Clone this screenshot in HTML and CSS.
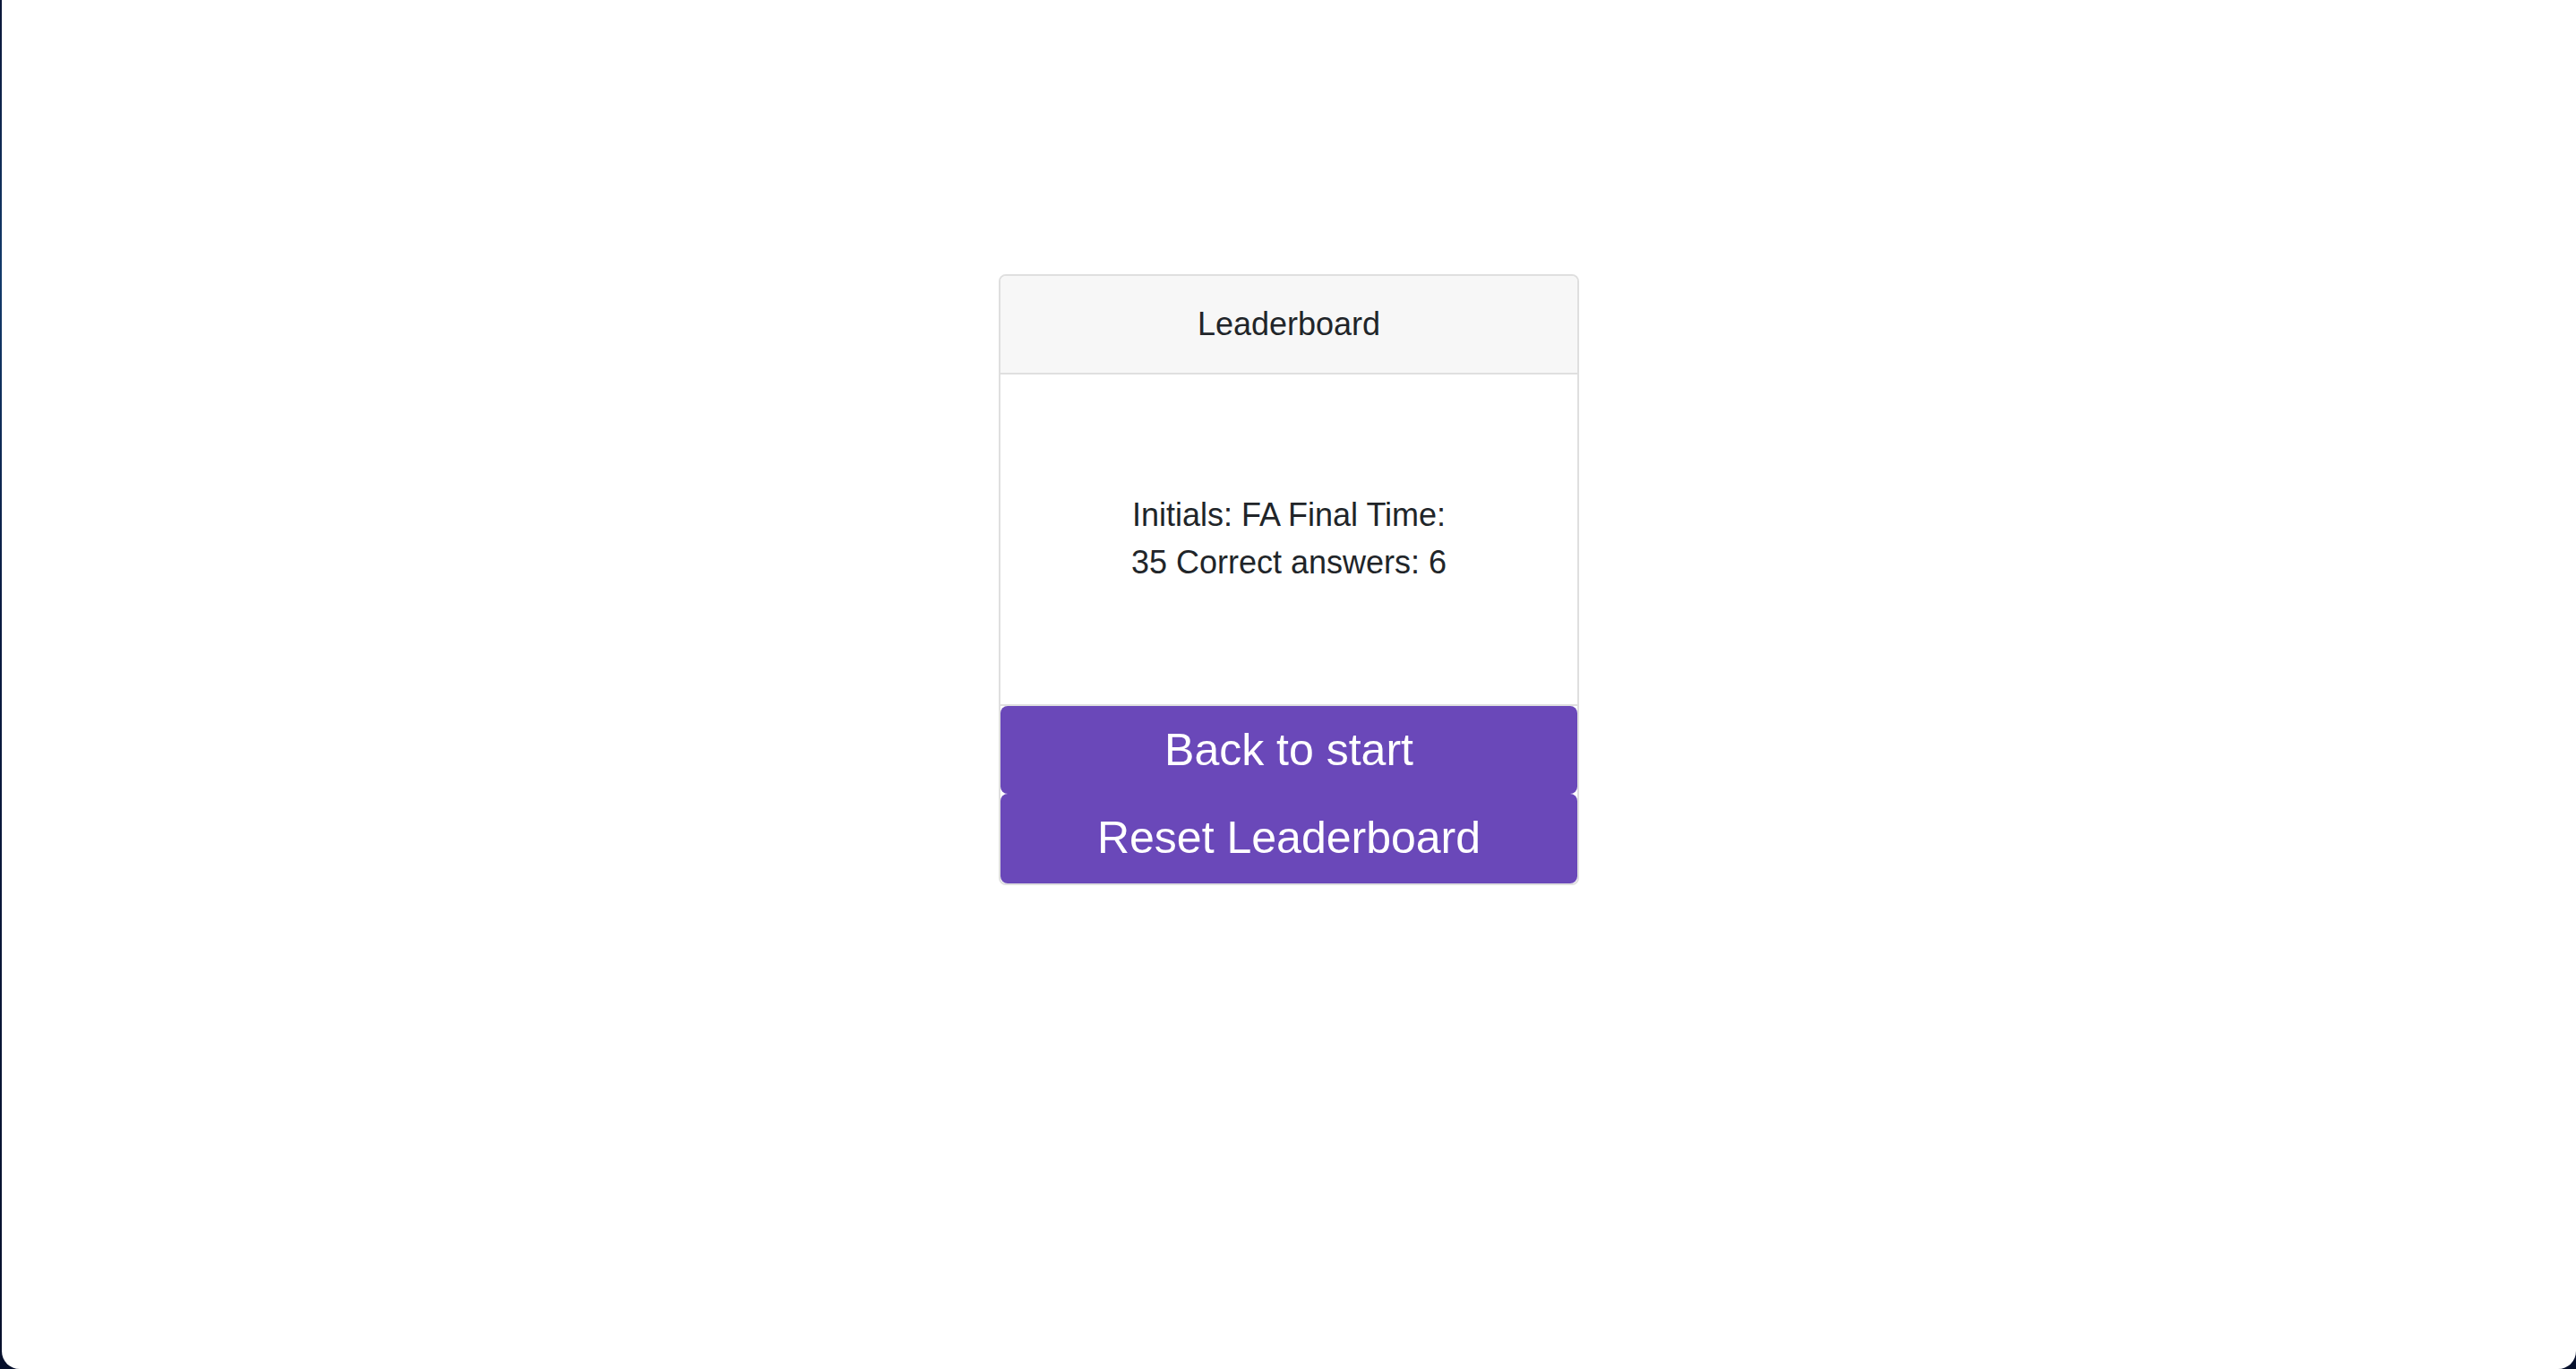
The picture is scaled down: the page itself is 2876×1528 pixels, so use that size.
FILE: index.html
```html
<!DOCTYPE html>
<html lang="en">
<head>
<meta charset="utf-8">
<title>Leaderboard</title>
<link rel="stylesheet" href="styles.css">
</head>
<body>
<div class="window">
  <main class="page">
    <section class="card">
      <header class="card-header">Leaderboard</header>
      <div class="card-body">
        <p class="score">Initials: FA Final Time: 35 Correct answers: 6</p>
      </div>
      <footer class="card-footer">
        <button class="btn" type="button">Back to start</button>
        <button class="btn btn-last" type="button">Reset Leaderboard</button>
      </footer>
    </section>
  </main>
</div>
</body>
</html>
```
FILE: styles.css
```css
html, body {
  margin: 0;
  padding: 0;
  height: 100%;
}

body {
  background: linear-gradient(180deg, #0b1638 0%, #123a6a 20%, #0a1a40 45%, #07102c 100%);
  font-family: "Liberation Sans", Arial, sans-serif;
  color: #212529;
}

.window {
  margin-left: 2px;
  height: 100%;
  background: #ffffff;
  border-bottom-left-radius: 20px;
  border-bottom-right-radius: 20px;
  box-sizing: border-box;
}

.page {
  display: flex;
  flex-direction: column;
  align-items: center;
  padding-top: 306px;
}

.card {
  width: 648px;
  box-sizing: border-box;
  border: 2px solid #dfdfdf;
  border-radius: 8px;
  background: #ffffff;
  display: flex;
  flex-direction: column;
}

.card-header {
  background: #f7f7f7;
  border-bottom: 2px solid #dfdfdf;
  border-radius: 6px 6px 0 0;
  padding: 28px 0;
  font-size: 36px;
  line-height: 52px;
  text-align: center;
}

.card-body {
  padding: 130px 0 132px;
  display: flex;
  justify-content: center;
}

.score {
  margin: 0;
  max-width: 380px;
  font-size: 36px;
  line-height: 53px;
  text-align: center;
}

.card-footer {
  border-top: 2px solid #dfdfdf;
  display: flex;
  flex-direction: column;
}

.btn {
  display: block;
  width: 100%;
  margin: 0;
  border: none;
  border-radius: 8px;
  background: #6a48b9;
  color: #ffffff;
  font-family: "Liberation Sans", Arial, sans-serif;
  font-size: 50px;
  line-height: 75px;
  padding: 11.5px 0;
  text-align: center;
  cursor: pointer;
}

.btn-last {
  padding-bottom: 13px;
}
```
